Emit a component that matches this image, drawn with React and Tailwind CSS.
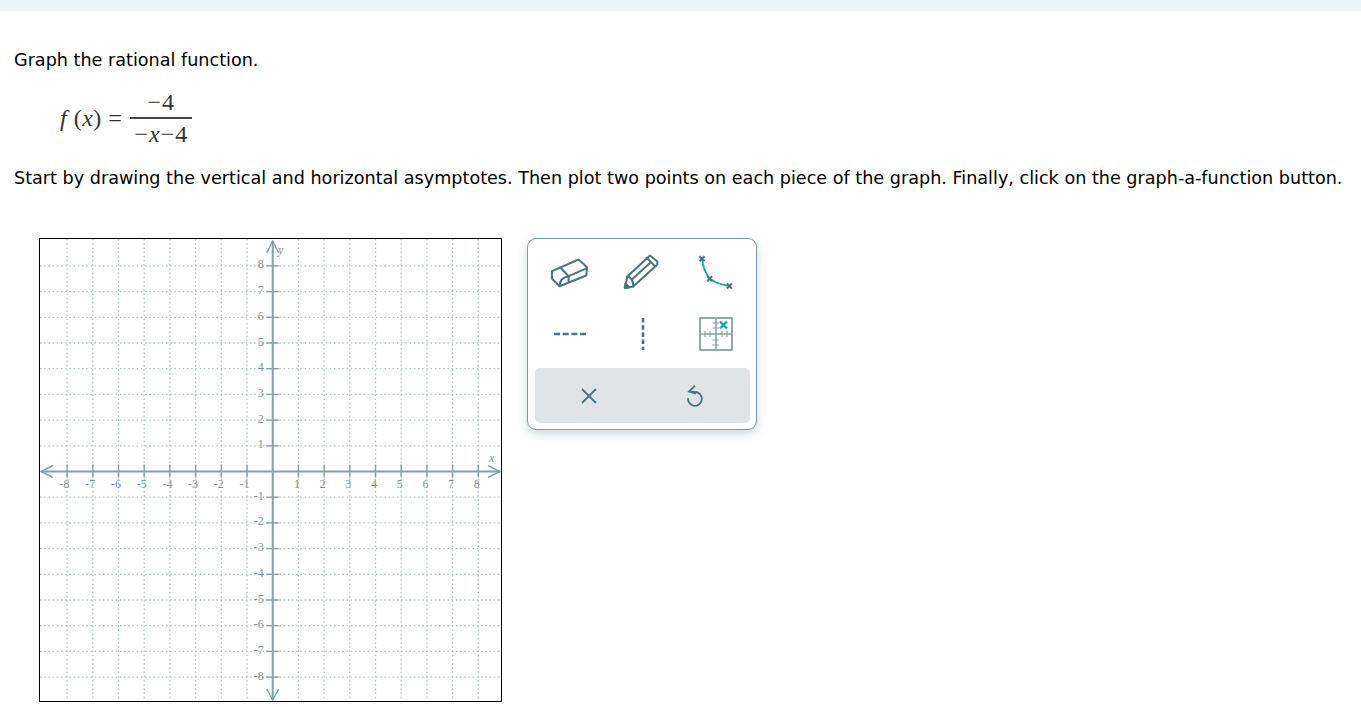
import React from "react";

const UX = 25.7;
const OX = 232.7; // origin inside the graph svg
const OY = 232.5;
const nums = [-8,-7,-6,-5,-4,-3,-2,-1,1,2,3,4,5,6,7,8];
const axis = "#82a0a8";

function Graph() {
  return (
    <svg width="461" height="462" viewBox="0 0 461 462" className="block">
      <g stroke="#b0c1c5" strokeWidth="1.3" strokeDasharray="1.5 2.7" fill="none">
        {nums.map((n) => (
          <line key={"v" + n} x1={OX + n * UX} x2={OX + n * UX} y1="0" y2="462" />
        ))}
        {nums.map((n) => (
          <line key={"h" + n} y1={OY + n * UX} y2={OY + n * UX} x1="0" x2="461" />
        ))}
      </g>
      <g stroke={axis} fill="none">
        <line x1="1" x2="460" y1={OY} y2={OY} strokeWidth="2" />
        <line y1="2" y2="460" x1={OX} x2={OX} strokeWidth="2" />
        <path d="M13 226.5 L1 232.5 L13 238.5 M448 226.5 L460 232.5 L448 238.5" strokeWidth="1.4" />
        <path d="M226.7 14 L232.7 2 L238.7 14 M226.7 450 L232.7 461 L238.7 450" strokeWidth="1.4" />
        {nums.map((n) => (
          <line key={"tx" + n} x1={OX + n * UX} x2={OX + n * UX} y1={OY - 7} y2={OY + 6} strokeWidth="1.4" />
        ))}
        {nums.map((n) => (
          <line key={"ty" + n} y1={OY + n * UX} y2={OY + n * UX} x1={OX - 6.5} x2={OX + 6} strokeWidth="1.4" />
        ))}
      </g>
      <g fill="#7d9198" fontFamily="'Liberation Serif', serif" fontSize="12">
        {nums.map((n) => (
          <text key={"lx" + n} x={OX + n * UX - (n < 0 ? 2.5 : 1.5)} y={OY + 16} textAnchor="middle">
            {n < 0 ? "-" + -n : n}
          </text>
        ))}
        {nums.map((n) => (
          <text key={"ly" + n} x={OX - 9} y={OY - n * UX + 2.5} textAnchor="end">
            {n < 0 ? "-" + -n : n}
          </text>
        ))}
        <text x="449" y="223" fontStyle="italic">x</text>
        <text x="238" y="15" fontStyle="italic">y</text>
      </g>
    </svg>
  );
}

const ic = "#4b7380";
const teal = "#0aa5bd";

function Eraser() {
  return (
    <svg width="40" height="32" viewBox="0.7 -1.5 40 32" fill="none" stroke={ic} strokeWidth="2" strokeLinejoin="round" strokeLinecap="round">
      <path d="M2.7 12.7 L29.3 1 L37.7 8.7 L37 17 L10.3 27.7 L2.7 20.3 Z" />
      <path d="M11 9 L19.3 17.7 L37.7 9.7" />
      <path d="M19.3 17.7 C14 18.5 10.5 21.5 10.3 27.7" />
      <path d="M19.3 17.7 L19.3 22.7" />
    </svg>
  );
}

function Pencil() {
  return (
    <svg width="40" height="40" viewBox="0 0 40 40" fill="none" stroke={ic} strokeWidth="2" strokeLinejoin="round" strokeLinecap="round">
      <path d="M4.3 23.5 L27 2.5 L34.3 8.5 L34.3 11.5 L10.3 33.5 L2 34.8 Z" />
      <path d="M4.3 23.5 C8 24 10.5 28 10.3 33.5" />
      <path d="M23.7 4.8 L32 13.2" />
      <path d="M9.7 25.8 L27.7 9.2" />
      <path d="M2 34.8 L2.6 31 L6 34.2 Z" fill={ic} strokeWidth="2.6" />
    </svg>
  );
}

function Mark({ x, y, color = ic }) {
  return (
    <path d={`M${x - 2.5} ${y - 2.5} L${x + 2.5} ${y + 2.5} M${x + 2.5} ${y - 2.5} L${x - 2.5} ${y + 2.5}`} stroke={color} strokeWidth="2" fill="none" />
  );
}

function CurveIcon() {
  return (
    <svg width="40" height="40" viewBox="0 0 40 40" fill="none">
      <path d="M6 5.8 C7 14 10 21 13.7 25.8 C19 29.5 26 32 33.4 33" stroke={teal} strokeWidth="1.8" />
      <Mark x={6} y={5.8} />
      <Mark x={13.7} y={25.8} />
      <Mark x={33.4} y={33} />
    </svg>
  );
}

function HDash() {
  return (
    <svg width="34" height="4" viewBox="0 0 34 4">
      <line x1="1" x2="33" y1="2" y2="2" stroke={ic} strokeWidth="2.6" strokeDasharray="6 2.7" />
    </svg>
  );
}

function VDash() {
  return (
    <svg width="4" height="32" viewBox="0 0 4 32">
      <line x1="2" x2="2" y1="0" y2="32" stroke={ic} strokeWidth="2.6" strokeDasharray="4.5 2.7" />
    </svg>
  );
}

function GridIcon() {
  const g = "#84a0a8";
  return (
    <svg width="34" height="34" viewBox="0 0 34 34" fill="none">
      <rect x="1" y="1" width="32" height="32" stroke={g} strokeWidth="1.8" />
      <path d="M17 1 V33 M1 17 H33" stroke={g} strokeWidth="1.5" />
      <path d="M6 14 V20 M11 14 V20 M23 14 V20 M28 14 V20 M13.5 6 H20 M13.5 11 H20 M13.5 23 H20 M13.5 28 H20" stroke={g} strokeWidth="1.1" />
      <path d="M21 4.5 L28 11.5 M28 4.5 L21 11.5" stroke={teal} strokeWidth="2.2" />
    </svg>
  );
}

function CloseIcon() {
  return (
    <svg width="16" height="16" viewBox="0 0 16 16" fill="none" stroke={ic} strokeWidth="1.9">
      <path d="M1 1 L15 15 M15 1 L1 15" />
    </svg>
  );
}

function UndoIcon() {
  return (
    <svg width="18" height="22" viewBox="0 0 18 22" fill="none" stroke={ic} strokeWidth="1.8">
      <path d="M8 0.6 L2 6.6 L9 8.6" />
      <path d="M2.6 6.8 C4.5 6.9 6.2 7 8 7 A6.9 6.9 0 1 1 1.1 13.2" />
    </svg>
  );
}

function Tool({ children }) {
  return <div className="flex h-[61px] items-center justify-center">{children}</div>;
}

export default function App() {
  return (
    <div className="min-h-[707px] bg-white text-[17.6px] text-black [font-family:'DejaVu_Sans',Verdana,sans-serif]">
      <div className="h-[11px] bg-[#eff3f5]" />
      <div className="pl-[14px]">
        <p className="mt-[37px] leading-[24px]">Graph the rational function.</p>
        <div className="mt-[14px] flex h-[64px] items-center pl-[46px] text-[24px] text-[#333] [font-family:'Liberation_Serif','Times_New_Roman',serif]">
          <span className="mr-[8px] whitespace-pre tracking-[0.5px]"><i>f</i> (<i>x</i>) =</span>
          <div className="flex w-[62px] flex-col items-center tracking-[1px]">
            <span className="leading-[30px]">−4</span>
            <span className="h-[2px] w-full bg-[#444]" />
            <span className="leading-[30px]">−<i>x</i>−4</span>
          </div>
        </div>
        <p className="mt-[16px] whitespace-nowrap leading-[24px]">
          Start by drawing the vertical and horizontal asymptotes. Then plot two points on each piece of the graph. Finally, click on the graph-a-function button.
        </p>
        <div className="mt-[48px] ml-[25px] flex items-start gap-[25px]">
          <div className="border border-black">
            <Graph />
          </div>
          <div className="w-[230px] rounded-[9px] border border-[#7f9ba3] bg-white pl-[7px] pr-[6px] pt-[3px] pb-[6px] shadow-[0_4px_10px_rgba(70,100,110,0.25)]">
            <div className="mx-[-2px] grid grid-cols-3">
              <Tool><Eraser /></Tool>
              <Tool><Pencil /></Tool>
              <Tool><CurveIcon /></Tool>
              <Tool><HDash /></Tool>
              <Tool><VDash /></Tool>
              <Tool><GridIcon /></Tool>
            </div>
            <div className="mt-[4px] grid h-[55px] grid-cols-2 items-center justify-items-center rounded-[5px] bg-[#dfe5e7]">
              <CloseIcon />
              <UndoIcon />
            </div>
          </div>
        </div>
      </div>
    </div>
  );
}
